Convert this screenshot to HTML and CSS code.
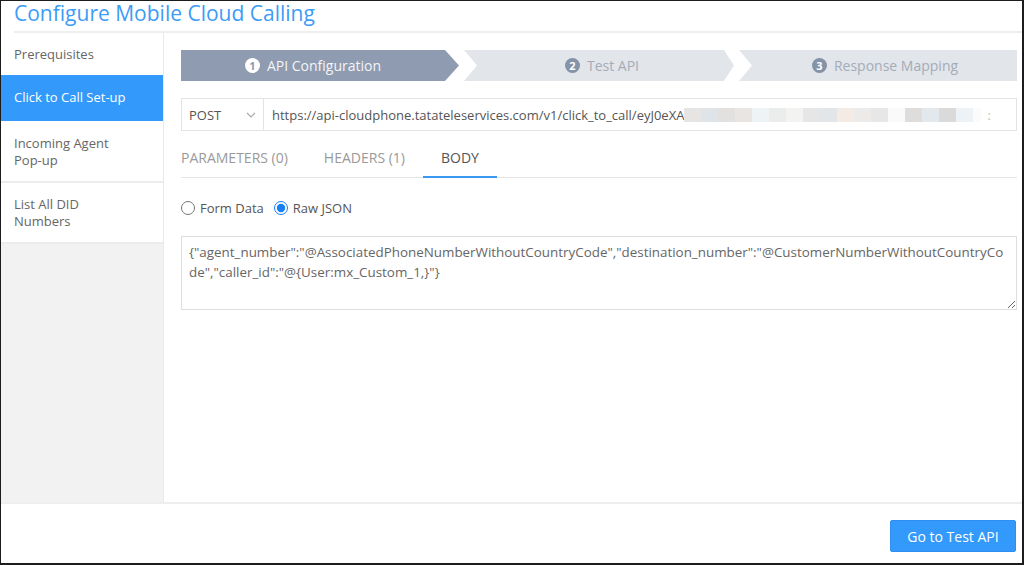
FILE: index.html
```html
<!DOCTYPE html>
<html lang="en">
<head>
  <meta charset="UTF-8" />
  <meta name="viewport" content="width=device-width, initial-scale=1.0" />
  <title>Configure Mobile Cloud Calling</title>
  <link rel="stylesheet" href="styles.css">
</head>
<body>
  <div class="page">
    <h1 class="title">Configure Mobile Cloud Calling</h1>
    <div class="layout">
      <ul class="sidebar">
        <li class="nav-item nav-first">Prerequisites</li>
        <li class="nav-item active">Click to Call Set-up</li>
        <li class="nav-item nav-tall">Incoming Agent<br>Pop-up</li>
        <li class="nav-item">List All DID<br>Numbers</li>
      </ul>
      <div class="main">
        <div class="steps">
          <div class="step step-one current"><span class="num">1</span>API Configuration</div>
          <div class="step step-two"><span class="num">2</span>Test API</div>
          <div class="step step-three"><span class="num">3</span>Response Mapping</div>
        </div>

        <div class="request">
          <div class="method">
            POST
            <svg class="chevron" width="10" height="6" viewBox="0 0 10 6"><path d="M1 1l4 4 4-4" fill="none" stroke="#aaa" stroke-width="1.2"/></svg>
          </div>
          <div class="url">https://api-cloudphone.tatateleservices.com/v1/click_to_call/eyJ0eXA<span class="mosaic"></span><span class="url-end">:</span></div>
        </div>

        <div class="tabs">
          <div class="tab">PARAMETERS (0)</div>
          <div class="tab">HEADERS (1)</div>
          <div class="tab selected">BODY</div>
        </div>

        <div class="body-type">
          <label><input type="radio" name="bt" /> Form Data</label>
          <label><input type="radio" name="bt" checked /> Raw JSON</label>
        </div>

        <textarea class="json" spellcheck="false">{"agent_number":"@AssociatedPhoneNumberWithoutCountryCode","destination_number":"@CustomerNumberWithoutCountryCode","caller_id":"@{User:mx_Custom_1,}"}</textarea>
      </div>
    </div>
    <div class="footer">
      <button type="button" class="next">Go to Test API</button>
    </div>
  </div>
</body>
</html>
```

FILE: styles.css
```css
body {
  margin: 0;
  font-family: "Open Sans", Arial, sans-serif;
  background: #fff;
}
.page {
  width: 1024px;
  height: 565px;
  box-sizing: border-box;
  border: 1px solid #1c1c1c;
  border-right-width: 2px;
  border-bottom-width: 2px;
  display: flex;
  flex-direction: column;
  overflow: hidden;
}
.title {
  margin: 0 0 0 13px;
  height: 30px;
  border-bottom: 2px solid #eeeeee;
  font-size: 21px;
  font-weight: normal;
  line-height: 24px;
  color: #3c9cf6;
}
.layout {
  flex: 1;
  display: flex;
  min-height: 0;
}
.sidebar {
  list-style: none;
  margin: 0;
  padding: 0;
  width: 162px;
  background: #f2f2f2;
  border-right: 1px solid #e9e9e9;
}
.nav-item {
  background: #fff;
  color: #666;
  font-size: 13px;
  line-height: 17px;
  padding: 13px 13px 12px;
  border-bottom: 2px solid #ececec;
}
.nav-first {
  padding: 13px 13px 12px;
  border-bottom: none;
}
.nav-tall {
  padding: 14px 13px 12px;
}
.nav-item.active {
  background: #3399fb;
  color: #fff;
  padding: 14px 13px 15px;
  border-bottom: none;
}
.main {
  flex: 1;
  padding: 17px 5px 0 17px;
}
.steps {
  display: flex;
  gap: 5px;
  height: 31px;
}
.step {
  flex: 1;
  display: flex;
  align-items: center;
  justify-content: center;
  background: #e2e5ea;
  color: #a4acb8;
  font-size: 14px;
  padding-left: 6px;
}
.step-one {
  clip-path: polygon(0 0, calc(100% - 14px) 0, 100% 50%, calc(100% - 14px) 100%, 0 100%);
  padding-left: 0;
  padding-right: 14px;
}
.step-two {
  clip-path: polygon(0 0, calc(100% - 10px) 0, 100% 50%, calc(100% - 10px) 100%, 0 100%, 13px 50%);
}
.step-three {
  clip-path: polygon(0 0, 100% 0, 100% 100%, 0 100%, 13px 50%);
  padding-left: 14px;
}
.step.current {
  background: #8e9bb0;
  color: #f4f5f7;
}
.num {
  display: inline-flex;
  align-items: center;
  justify-content: center;
  width: 15px;
  height: 15px;
  border-radius: 50%;
  background: #8593a8;
  color: #fff;
  font-size: 11px;
  font-weight: bold;
  margin-right: 7px;
}
.current .num {
  background: #fff;
  color: #8e9bb0;
}
.request {
  display: flex;
  margin-top: 17px;
  height: 33px;
  font-size: 13px;
  color: #555;
}
.method {
  width: 83px;
  box-sizing: border-box;
  border: 1px solid #e3e3e3;
  display: flex;
  align-items: center;
  justify-content: space-between;
  padding: 0 7px 0 7px;
}
.url {
  flex: 1;
  box-sizing: border-box;
  border: 1px solid #e3e3e3;
  border-left: none;
  display: flex;
  align-items: center;
  padding-left: 8px;
  white-space: nowrap;
  overflow: hidden;
}
.mosaic {
  width: 297px;
  height: 14px;
  background: linear-gradient(to right,
    #e7e5e3 0 17px, #dfe4e8 17px 34px, #e2e1df 34px 51px, #e8e5e2 51px 68px,
    #eef3f6 68px 85px, #ebeded 85px 102px, #f3f3f2 102px 119px, #e6e6e6 119px 136px,
    #e3e6e9 136px 153px, #f3ebe4 153px 170px, #ecebea 170px 187px, #e7e7e7 187px 204px,
    #fafafa 204px 221px, #dedddc 221px 238px, #e3e8ec 238px 255px, #dadadb 255px 272px,
    #edf2f6 272px 289px, #fbfbfb 289px 297px);
}
.url-end {
  margin-left: 6px;
  color: #bbb;
}
.tabs {
  display: flex;
  margin-top: 14px;
  border-bottom: 1px solid #e6e6e6;
}
.tab {
  font-size: 14px;
  color: #9a9a9a;
  padding: 3px 18px 9px;
  border-bottom: 2px solid transparent;
  margin-bottom: -1px;
}
.tab:first-child {
  padding-left: 0;
}
.tab.selected {
  color: #555;
  border-bottom-color: #3a98f2;
}
.body-type {
  display: flex;
  gap: 10px;
  margin-top: 21px;
  font-size: 13px;
  color: #555;
}
.body-type label {
  display: flex;
  align-items: center;
}
.body-type input {
  margin: 0 5px 0 0;
  width: 14px;
  height: 14px;
  accent-color: #1a7ff0;
}
.json {
  display: block;
  width: 100%;
  box-sizing: border-box;
  height: 74px;
  margin-top: 19px;
  padding: 5px 7px;
  border: 1px solid #dedede;
  border-radius: 0;
  font-family: "Open Sans", Arial, sans-serif;
  font-size: 13.4px;
  line-height: 20px;
  color: #666;
  resize: vertical;
  word-break: break-all;
}
.footer {
  height: 61px;
  flex: none;
  border-top: 2px solid #eeeeee;
  display: flex;
  justify-content: flex-end;
  align-items: flex-start;
  padding: 16px 6px 0 0;
  box-sizing: border-box;
}
.next {
  width: 126px;
  height: 32px;
  background: #3399fb;
  color: #fff;
  border: 1px solid #2e8ff0;
  border-radius: 2px;
  font-family: "Open Sans", Arial, sans-serif;
  font-size: 14px;
}
```
